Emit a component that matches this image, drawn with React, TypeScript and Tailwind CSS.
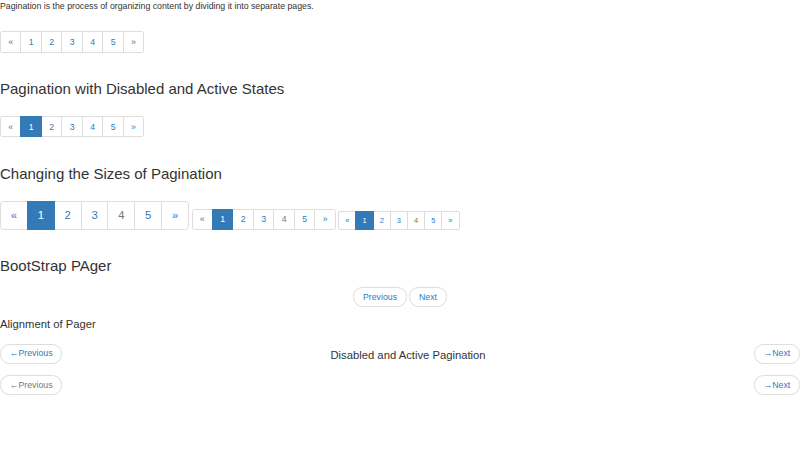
import React from "react";

const font = { fontFamily: '"Liberation Sans", Arial, Helvetica, sans-serif' };

type Item = { label: string; active?: boolean; disabled?: boolean };

const items = (activeFirst: boolean, disabledPrev: boolean, disabledFour: boolean): Item[] => [
  { label: "«", disabled: disabledPrev },
  { label: "1", active: activeFirst },
  { label: "2" },
  { label: "3" },
  { label: "4", disabled: disabledFour },
  { label: "5" },
  { label: "»" },
];

function Pagination({ list, size }: { list: Item[]; size: "lg" | "md" | "sm" }) {
  const sizeCls =
    size === "lg"
      ? "text-[11.25px] leading-[15px] py-[5.9px] px-[9.8px]"
      : size === "sm"
      ? "text-[7.5px] leading-[11.25px] py-[2.75px] px-[6px]"
      : "text-[8.75px] leading-[12.5px] py-[3.4px] px-[7.3px]";
  const radiusL = size === "lg" ? "rounded-l-[3.75px]" : size === "sm" ? "rounded-l-[2px]" : "rounded-l-[2.5px]";
  const radiusR = size === "lg" ? "rounded-r-[3.75px]" : size === "sm" ? "rounded-r-[2px]" : "rounded-r-[2.5px]";
  return (
    <ul className="flex">
      {list.map((it, i) => {
        const color = it.active
          ? "bg-[#337ab7] border-[#337ab7] text-white relative z-10"
          : it.disabled
          ? "bg-white border-[#dddddd] text-[#777777]"
          : "bg-white border-[#dddddd] text-[#337ab7]";
        return (
          <li key={i} className={i === 0 ? "" : "-ml-px"}>
            <span
              className={`block border ${sizeCls} ${color} ${i === 0 ? radiusL : ""} ${
                i === list.length - 1 ? radiusR : ""
              }`}
            >
              {it.label}
            </span>
          </li>
        );
      })}
    </ul>
  );
}

function PagerBtn({ children, disabled }: { children: React.ReactNode; disabled?: boolean }) {
  return (
    <span
      className={`inline-block border border-[#dddddd] bg-white rounded-[9.4px] px-[8.75px] py-[2.75px] text-[8.75px] leading-[12.5px] ${
        disabled ? "text-[#777777]" : "text-[#337ab7]"
      }`}
    >
      {children}
    </span>
  );
}

export default function App() {
  return (
    <div className="w-[800px] h-[450px] bg-white text-[#333333] overflow-hidden" style={font}>
      <p className="text-[8.75px] leading-[12.5px] mb-[6.25px]">
        Pagination is the process of organizing content by dividing it into separate pages.
      </p>

      <div className="pt-[12.5px] pb-[15.9px]">
        <Pagination list={items(false, false, false)} size="md" />
      </div>

      <h3 className="text-[15px] leading-[16.5px] mt-[12.5px] mb-[6.25px]">
        Pagination with Disabled and Active States
      </h3>
      <div className="pt-[12.5px] pb-[15.9px]">
        <Pagination list={items(true, true, false)} size="md" />
      </div>

      <h3 className="text-[15px] leading-[16.5px] mt-[12.5px] mb-[6.25px]">Changing the Sizes of Pagination</h3>
      <div className="pt-[12.5px] pb-[15.9px] flex items-end gap-[2.5px]">
        <Pagination list={items(true, false, true)} size="lg" />
        <Pagination list={items(true, false, true)} size="md" />
        <Pagination list={items(true, false, true)} size="sm" />
      </div>

      <h3 className="text-[15px] leading-[16.5px] mt-[12.5px] mb-[6.25px]">BootStrap PAger</h3>
      <div className="mt-[12px] flex justify-center gap-[2.5px]">
        <PagerBtn>Previous</PagerBtn>
        <PagerBtn>Next</PagerBtn>
      </div>

      <h4 className="text-[11.25px] leading-[12.4px] mt-[11px] mb-[6.25px]">Alignment of Pager</h4>
      <div className="mt-[13.5px] flex items-center">
        <PagerBtn>←Previous</PagerBtn>
        <div className="flex-1 text-center text-[11.25px] leading-[12.4px] pt-[3px]">Disabled and Active Pagination</div>
        <PagerBtn>→Next</PagerBtn>
      </div>
      <div className="mt-[11.5px] flex justify-between">
        <PagerBtn disabled>←Previous</PagerBtn>
        <PagerBtn>→Next</PagerBtn>
      </div>
    </div>
  );
}
